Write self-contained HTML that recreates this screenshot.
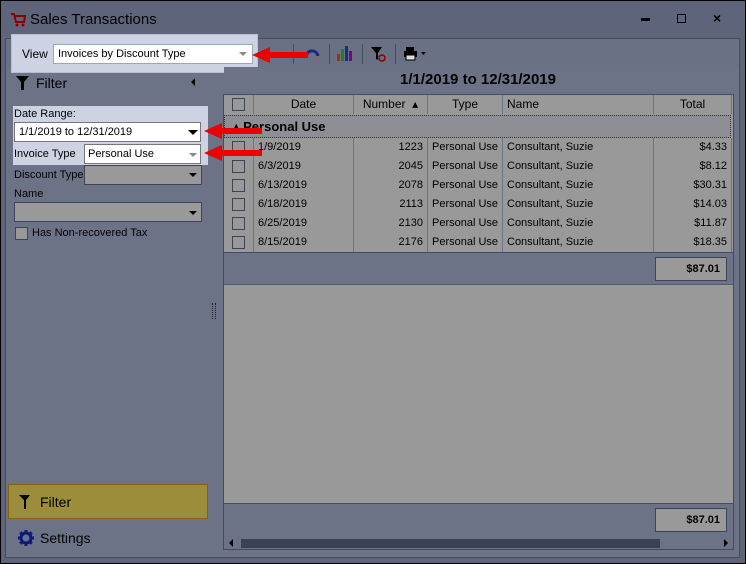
<!DOCTYPE html><html><head><style>
body{margin:0;width:746px;height:564px;overflow:hidden;background:#5e6479;font-family:"Liberation Sans",sans-serif;font-size:11px;color:#000;position:relative}
.a{position:absolute;box-sizing:border-box}
.cb{border:1px solid #3e4456;background:#999;width:13px;height:13px}
.row{position:absolute;left:224px;width:507px;height:19px;border-bottom:1px solid #6e7488;background:#999}
.row div{position:absolute;top:0;height:19px;line-height:19px;border-right:1px solid #6e7488;box-sizing:border-box;padding:0 4px;white-space:nowrap;overflow:hidden}
.combo{background:#999;border:1px solid #3e4456}
</style></head><body>
<div class="a" style="left:0;top:0;width:746px;height:564px;border:1px solid #000"></div>
<svg class="a" style="left:10px;top:12px" width="16" height="16" viewBox="0 0 16 16"><path d="M1 2h3l2 8h8l1-6H5" stroke="#8a0000" stroke-width="2" fill="none"/><circle cx="7" cy="13" r="1.5" fill="#8a0000"/><circle cx="13" cy="13" r="1.5" fill="#8a0000"/></svg>
<div class="a" style="left:30px;top:11px;font-size:15px">Sales Transactions</div>
<div class="a" style="left:641px;top:18px;width:9px;height:3px;background:#000"></div>
<div class="a" style="left:677px;top:14px;width:9px;height:9px;border:1.5px solid #000"></div>
<div class="a" style="left:713px;top:10px;font-size:14px;font-weight:bold">×</div>
<div class="a" style="left:5px;top:38px;width:735px;height:520px;border:1px solid #464c60;background:#6c7386"></div>
<div class="a" style="left:6px;top:39px;width:733px;height:28px;background:#6a7185"></div>
<div class="a" style="left:293px;top:44px;width:1px;height:20px;background:#454b5e"></div>
<div class="a" style="left:329px;top:44px;width:1px;height:20px;background:#454b5e"></div>
<div class="a" style="left:362px;top:44px;width:1px;height:20px;background:#454b5e"></div>
<div class="a" style="left:395px;top:44px;width:1px;height:20px;background:#454b5e"></div>
<svg class="a" style="left:302px;top:46px" width="20" height="16"><path d="M4 12 A6 6 0 1 1 16 10" stroke="#1a2a80" stroke-width="3" fill="none"/></svg>
<div class="a" style="left:337px;top:54px;width:3px;height:7px;background:#a03010"></div>
<div class="a" style="left:341px;top:49px;width:3px;height:12px;background:#208020"></div>
<div class="a" style="left:345px;top:46px;width:3px;height:15px;background:#1a2a90"></div>
<div class="a" style="left:349px;top:51px;width:3px;height:10px;background:#800080"></div>
<svg class="a" style="left:370px;top:45px" width="16" height="18"><path d="M1 2h11l-4 6v7l-2-1V8z" fill="#000"/><circle cx="12" cy="13" r="3" stroke="#8a0000" stroke-width="1.5" fill="none"/></svg>
<svg class="a" style="left:403px;top:46px" width="24" height="16"><rect x="3" y="1" width="8" height="4" fill="#000"/><rect x="1" y="5" width="13" height="6" fill="#000"/><rect x="3" y="9" width="9" height="5" fill="#ddd" stroke="#000"/><path d="M18 6h5l-2.5 3z" fill="#000"/></svg>
<div class="a" style="left:11px;top:34px;width:247px;height:39px;background:#cdd3e2;border:1px solid #b8bfd0"></div>
<div class="a" style="left:22px;top:47px;font-size:12px">View</div>
<div class="a" style="left:53px;top:44px;width:200px;height:20px;background:#fff;border:1px solid #9aa;padding:3px 4px">Invoices by Discount Type</div>
<div class="a" style="left:239px;top:52px;border:4px solid transparent;border-top:4px solid #888"></div>
<svg class="a" style="left:16px;top:76px" width="14" height="14"><path d="M0 0h13L8 6v8H5V6z" fill="#000"/></svg>
<div class="a" style="left:36px;top:75px;font-size:14px">Filter</div>
<div class="a" style="left:191px;top:78px;border:4px solid transparent;border-right:4px solid #000;border-left:0"></div>
<div class="a" style="left:224px;top:67px;width:515px;height:26px;background:#6c7386"></div>
<div class="a" style="left:223px;top:71px;width:510px;text-align:center;font-size:15px;font-weight:bold">1/1/2019 to 12/31/2019</div>
<div class="a" style="left:13px;top:106px;width:195px;height:59px;background:#cdd3e2"></div>
<div class="a" style="left:14px;top:108px">Date Range:</div>
<div class="a" style="left:14px;top:122px;width:187px;height:20px;background:#fff;border:1px solid #777;padding:3px 4px">1/1/2019 to 12/31/2019</div>
<div class="a" style="left:188px;top:130px;border:5px solid transparent;border-top:5px solid #000"></div>
<div class="a" style="left:14px;top:148px">Invoice Type</div>
<div class="a" style="left:84px;top:144px;width:117px;height:20px;background:#fff;border:1px solid #777;padding:3px 3px">Personal Use</div>
<div class="a" style="left:189px;top:153px;border:4px solid transparent;border-top:4px solid #888"></div>
<div class="a" style="left:14px;top:169px">Discount Type</div>
<div class="a combo" style="left:84px;top:165px;width:118px;height:20px"></div>
<div class="a" style="left:189px;top:173px;border:4px solid transparent;border-top:4px solid #000"></div>
<div class="a" style="left:14px;top:188px">Name</div>
<div class="a combo" style="left:14px;top:202px;width:188px;height:20px"></div>
<div class="a" style="left:189px;top:211px;border:4px solid transparent;border-top:4px solid #000"></div>
<div class="a cb" style="left:15px;top:227px"></div>
<div class="a" style="left:32px;top:227px">Has Non-recovered Tax</div>
<div class="a" style="left:212px;top:303px;width:4px;height:16px;border-left:1px dotted #222;border-right:1px dotted #222"></div>
<div class="a" style="left:8px;top:484px;width:200px;height:35px;background:#9b8d3a;border:1px solid #8a6010"></div>
<svg class="a" style="left:19px;top:495px" width="12" height="14"><path d="M0 0h11L7 5v9H5V5z" fill="#000"/></svg>
<div class="a" style="left:40px;top:494px;font-size:14px">Filter</div>
<svg class="a" style="left:18px;top:530px" width="16" height="16" viewBox="0 0 16 16"><circle cx="8" cy="8" r="5" fill="none" stroke="#0a1a7a" stroke-width="3"/><g stroke="#0a1a7a" stroke-width="3"><path d="M8 0v3M8 13v3M0 8h3M13 8h3M2.3 2.3l2 2M11.7 11.7l2 2M2.3 13.7l2-2M11.7 4.3l2-2"/></g></svg>
<div class="a" style="left:40px;top:530px;font-size:14px">Settings</div>
<div class="a" style="left:223px;top:94px;width:511px;height:456px;border:1px solid #464c60;background:#999"></div>
<div class="row" style="top:95px;height:20px;font-size:12px"><div style="left:0;width:30px"><span class="a cb" style="left:8px;top:3px"></span></div><div style="left:30px;width:100px;text-align:center">Date</div><div style="left:130px;width:74px;text-align:center">Number &nbsp;▴</div><div style="left:204px;width:75px;text-align:center">Type</div><div style="left:279px;width:151px">Name</div><div style="left:430px;width:78px;text-align:center">Total</div></div>
<div class="a" style="left:224px;top:115px;width:507px;height:23px;border:1px dotted #333;background:#8e8f94"></div>
<div class="a" style="left:233px;top:119px;font-weight:bold;font-size:13px">▴ Personal Use</div>
<div class="row" style="top:138px"><div style="left:0;width:30px"><span class="a cb" style="left:8px;top:3px"></span></div><div style="left:30px;width:100px">1/9/2019</div><div style="left:130px;width:74px;text-align:right">1223</div><div style="left:204px;width:75px">Personal Use</div><div style="left:279px;width:151px">Consultant, Suzie</div><div style="left:430px;width:78px;text-align:right">$4.33</div></div>
<div class="row" style="top:157px"><div style="left:0;width:30px"><span class="a cb" style="left:8px;top:3px"></span></div><div style="left:30px;width:100px">6/3/2019</div><div style="left:130px;width:74px;text-align:right">2045</div><div style="left:204px;width:75px">Personal Use</div><div style="left:279px;width:151px">Consultant, Suzie</div><div style="left:430px;width:78px;text-align:right">$8.12</div></div>
<div class="row" style="top:176px"><div style="left:0;width:30px"><span class="a cb" style="left:8px;top:3px"></span></div><div style="left:30px;width:100px">6/13/2019</div><div style="left:130px;width:74px;text-align:right">2078</div><div style="left:204px;width:75px">Personal Use</div><div style="left:279px;width:151px">Consultant, Suzie</div><div style="left:430px;width:78px;text-align:right">$30.31</div></div>
<div class="row" style="top:195px"><div style="left:0;width:30px"><span class="a cb" style="left:8px;top:3px"></span></div><div style="left:30px;width:100px">6/18/2019</div><div style="left:130px;width:74px;text-align:right">2113</div><div style="left:204px;width:75px">Personal Use</div><div style="left:279px;width:151px">Consultant, Suzie</div><div style="left:430px;width:78px;text-align:right">$14.03</div></div>
<div class="row" style="top:214px"><div style="left:0;width:30px"><span class="a cb" style="left:8px;top:3px"></span></div><div style="left:30px;width:100px">6/25/2019</div><div style="left:130px;width:74px;text-align:right">2130</div><div style="left:204px;width:75px">Personal Use</div><div style="left:279px;width:151px">Consultant, Suzie</div><div style="left:430px;width:78px;text-align:right">$11.87</div></div>
<div class="row" style="top:233px"><div style="left:0;width:30px"><span class="a cb" style="left:8px;top:3px"></span></div><div style="left:30px;width:100px">8/15/2019</div><div style="left:130px;width:74px;text-align:right">2176</div><div style="left:204px;width:75px">Personal Use</div><div style="left:279px;width:151px">Consultant, Suzie</div><div style="left:430px;width:78px;text-align:right">$18.35</div></div>
<div class="a" style="left:224px;top:252px;width:509px;height:33px;background:#6c7386;border-top:1px solid #464c60;border-bottom:1px solid #555b6e"></div>
<div class="a" style="left:655px;top:257px;width:72px;height:24px;background:#999;border:1px solid #3e4456;text-align:right;padding:5px 6px;font-weight:bold;font-size:11px">$87.01</div>
<div class="a" style="left:224px;top:503px;width:509px;height:46px;background:#6c7386;border-top:1px solid #464c60"></div>
<div class="a" style="left:655px;top:508px;width:72px;height:24px;background:#999;border:1px solid #3e4456;text-align:right;padding:5px 6px;font-weight:bold;font-size:11px">$87.01</div>
<div class="a" style="left:241px;top:539px;width:419px;height:9px;background:#384254"></div>
<div class="a" style="left:229px;top:539px;border:4px solid transparent;border-right:4px solid #000;border-left:0"></div>
<div class="a" style="left:724px;top:539px;border:4px solid transparent;border-left:4px solid #000;border-right:0"></div>
<svg class="a" style="left:0;top:0" width="746" height="200"><g fill="#e00"><rect x="268" y="52" width="40" height="6"/><path d="M252 55l18-8v16z"/><rect x="220" y="128" width="42" height="6"/><path d="M204 131l18-8v16z"/><rect x="220" y="150" width="42" height="6"/><path d="M204 153l18-8v16z"/></g></svg>
</body></html>
